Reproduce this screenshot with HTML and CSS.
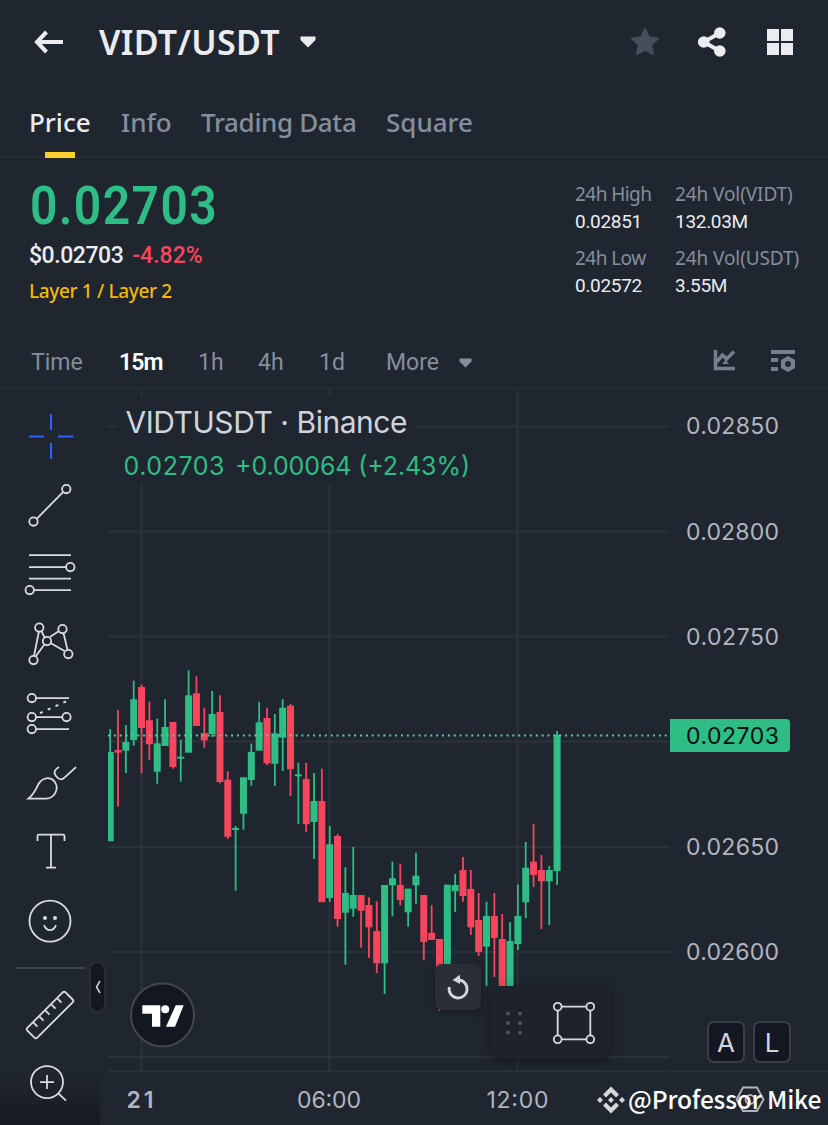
FILE: index.html
```
<!DOCTYPE html>
<html lang="en">
<head>
    <meta charset="UTF-8">
    <meta name="viewport" content="width=device-width, initial-scale=1.0">
    <title>VIDT/USDT</title>
    <link rel="stylesheet" href="styles.css">
</head>
<body>

<!-- Header -->
<header class="header">
    <svg class="back" width="30" height="24" viewBox="0 0 30 24"><path d="M12.500 2 3 12l9.500 10M3 12h26" fill="none" stroke="#eaecef" stroke-width="4"/></svg>
    <h1 class="pair">VIDT/USDT</h1>
    <svg class="pair-arrow" width="16" height="12" viewBox="0 0 16 12"><path d="M.5.5h15v3.500L8 11.500.5 4z" fill="#eaecef"/></svg>
    <div class="header-icons">
        <svg width="30" height="30" viewBox="0 0 30 30"><path d="m15 2 3.900 8.300 9.100 1.200-6.700 6.300 1.700 9.200-8-4.400L7 27l1.700-9.200L2 11.500l9.100-1.200z" fill="#474d5b" stroke="#474d5b" stroke-width="2" stroke-linejoin="round"/></svg>
        <svg width="30" height="30" viewBox="0 0 30 30"><g fill="#eaecef"><circle cx="6.700" cy="15" r="5.800"/><circle cx="22.800" cy="6" r="5.800"/><circle cx="22.800" cy="24" r="5.800"/></g><path d="M22.800 6 6.700 15l16.100 9" fill="none" stroke="#eaecef" stroke-width="4"/></svg>
        <svg class="menu" width="26" height="26" viewBox="0 0 26 26"><path d="M0 0h12v12H0zM14 0h12v12H14zM0 14h12v12H0zM14 14h12v12H14z" fill="#eaecef"/></svg>
    </div>
</header>

<!-- Tabs -->
<nav class="tabs">
    <a class="tab active">Price</a>
    <a class="tab tab-info">Info</a>
    <a class="tab tab-data">Trading Data</a>
    <a class="tab tab-square">Square</a>
</nav>

<!-- Ticker -->
<section class="ticker">
    <div class="quote">
        <div class="last"><span class="fit">0.02703</span></div>
        <div class="fiat"><span>$0.02703</span><span class="down">-4.82%</span></div>
        <div class="tag">Layer 1 / Layer 2</div>
    </div>
    <div class="stats">
        <div class="stat"><span class="label narrow">24h High</span><span class="value">0.02851</span></div>
        <div class="stat"><span class="label">24h Vol(VIDT)</span><span class="value">132.03M</span></div>
        <div class="stat"><span class="label narrow">24h Low</span><span class="value">0.02572</span></div>
        <div class="stat"><span class="label">24h Vol(USDT)</span><span class="value">3.55M</span></div>
    </div>
</section>

<!-- Intervals -->
<div class="intervals">
    <span class="time">Time</span>
    <span class="m15 selected">15m</span>
    <span class="h1">1h</span>
    <span class="h4">4h</span>
    <span class="d1">1d</span>
    <span class="more">More</span>
    <svg width="13" height="10" viewBox="0 0 13 10"><path d="M.5.5h12v3L6.500 9.500.5 3.500z" fill="#848e9c"/></svg>
    <div class="interval-icons">
        <svg width="24" height="24" viewBox="0 0 24 24"><path d="M3.500 1v18.500H23M4.500 13l6-7 4 4L22 2.500" fill="none" stroke="#767f8d" stroke-width="3.500"/><path d="m10 15 3.500-4 3.500 4z" fill="#767f8d"/></svg>
        <svg width="26" height="24" viewBox="0 0 26 24"><path d="M1 1h24v4H1zM1 9h7v4H1zM1 18h7v4H1z" fill="#767f8d"/><path d="m18 7 7 4v8l-7 4-7-4v-8zm0 5.100a2.900 2.900 0 1 0 0 5.800 2.900 2.900 0 0 0 0-5.800z" fill="#767f8d" fill-rule="evenodd"/></svg>
    </div>
</div>

<!-- Chart -->
<main class="chart">
    <div class="tools">
        <svg class="tool cross" viewBox="0 0 100 69"><path d="M51 12v16M51 41v16M29 34.500h15M58 34.500h15.500"/></svg>
        <svg class="tool" viewBox="0 0 100 69"><path d="m36.500 48 26.500-27"/><circle cx="33.500" cy="50.500" r="4.200"/><circle cx="66.300" cy="18" r="4.200"/></svg>
        <svg class="tool" viewBox="0 0 100 69"><path d="M29 15h42M29 27h37M29 38.500h42M34 50h37"/><circle cx="70.300" cy="27" r="4.200"/><circle cx="29.700" cy="50" r="4.200"/></svg>
        <svg class="tool" viewBox="0 0 100 69"><path d="m39 22-5 25M41.500 22l3.500 7M50 28l9-6M63.500 24l4 17M50.500 34l14 8M44 36l-8 11"/><circle cx="39.300" cy="18.500" r="4.200"/><circle cx="62.500" cy="20" r="4.200"/><circle cx="47" cy="32" r="4.200"/><circle cx="33.500" cy="51" r="4.200"/><circle cx="68.300" cy="45" r="4.200"/></svg>
        <svg class="tool" viewBox="0 0 100 69"><path d="M36 20h33M36 39h26M36 51h33"/><path d="m40 35 27-12" stroke-dasharray="3 5.500" stroke-width="2"/><circle cx="31.800" cy="20" r="4.200"/><circle cx="31.800" cy="39" r="4.200"/><circle cx="66.500" cy="39" r="4.200"/><circle cx="31.800" cy="51" r="4.200"/></svg>
        <svg class="tool" viewBox="0 0 100 69"><path d="M28.500 51.500c6-5 7.500-10 10-14.500 4-7 12-7.500 16-2.500 5.500 7.500-.5 17-8.500 17zM59 20c-5 2.500-5.500 6-3 9 3.500 4.500 6 4 9 1l11-10"/></svg>
        <svg class="tool" viewBox="0 0 100 69"><path d="M37.500 24v-5q0-1.500 1.500-1.500h24q1.500 0 1.500 1.500v5M51 17.500v33M46 50.500h10"/></svg>
        <svg class="tool" viewBox="0 0 100 69"><circle cx="50" cy="35" r="20.500"/><path d="M44 39q2 5 6 5t6-5"/><g class="dot"><circle cx="45" cy="32" r="2"/><circle cx="55" cy="32" r="2"/></g></svg>
        <div class="divider"></div>
        <svg class="tool" viewBox="0 0 100 69"><rect x="23" y="27" width="54" height="14" rx="2" transform="rotate(-45 50 34)"/><path d="m33.500 41.500 4 4M39.500 35.500l4 4M45.500 29.500l4 4M51.500 23.500l4 4M57.500 17.500l4 4"/></svg>
        <svg class="tool" viewBox="0 0 100 69"><circle cx="47" cy="32" r="16"/><path d="M47 25v14M40 32h14M58 43l8 7.500"/></svg>
    </div>

    <svg class="plot" viewBox="108 389 720 736">
        <g class="grid">
            <path d="M108 426.500h8M416 426.500h254M108 531.500h562M108 636.500h562M108 741.500h562M108 847h562M108 952h562M108 1057h562M108 1071.500h562M672 1071.500h156"/>
            <path d="M141.500 389v8M141.500 483v588M329.500 389v8M329.500 483v588M517.500 389v682"/>
        </g>
        <g id="candles"></g>
        <path class="last-line" d="M108 735.500h562"/>
        <g class="axis">
            <text x="686" y="434" textLength="93">0.02850</text>
            <text x="686" y="539.500" textLength="93">0.02800</text>
            <text x="686" y="644.500" textLength="93">0.02750</text>
            <text x="686" y="855" textLength="93">0.02650</text>
            <text x="686" y="960" textLength="93">0.02600</text>
            <text class="day" x="126.500" y="1108" textLength="27">21</text>
            <text x="297" y="1108" textLength="64">06:00</text>
            <text x="486.500" y="1108" textLength="62">12:00</text>
        </g>
        <path d="M670 719h116q4 0 4 4v25q0 4-4 4H670z" fill="#2ebd85"/>
        <text class="last-label" x="686" y="743.500" textLength="93">0.02703</text>
        <text class="symbol" x="125.500" y="433" textLength="282">VIDTUSDT · Binance</text>
        <text class="change" x="123.500" y="474.500" textLength="101">0.02703</text>
        <text class="change" x="235" y="474.500" textLength="235">+0.00064 (+2.43%)</text>

        <!-- TradingView badge -->
        <circle cx="162.500" cy="1015" r="31.500" fill="#131722" stroke="#434651" stroke-width="2"/>
        <path d="M142.300 1005.300h18v21.400h-8.300v-13h-9.700zM175.700 1005.300h8L175 1026.700h-9z" fill="#fff"/>
        <circle cx="165.200" cy="1009.300" r="4" fill="#fff"/>

        <path d="m743 1087.500h14l6.500 12-6.500 11.500h-14l-6.500-11.500z" fill="none" stroke="#b2b5be" stroke-width="1.800"/>
        <circle cx="750" cy="1099.500" r="4.500" fill="none" stroke="#b2b5be" stroke-width="1.800"/>
    </svg>

    <div class="collapse"><svg width="6" height="14" viewBox="0 0 6 14"><path d="M5 1 1.500 7 5 13" fill="none" stroke="#d1d4dc" stroke-width="1.500"/></svg></div>

    <div class="reset"><svg width="24" height="26" viewBox="0 0 24 26"><path d="M3.300 13A9 9 0 1 0 12 6" fill="none" stroke="#d1d4dc" stroke-width="2.800"/><path d="M6.500 6 14 .8V10z" fill="#d1d4dc"/></svg></div>

    <div class="floating">
        <svg width="18" height="26" viewBox="0 0 18 26"><g fill="#50535e"><circle cx="3" cy="3.500" r="2"/><circle cx="15" cy="3.500" r="2"/><circle cx="3" cy="13" r="2"/><circle cx="15" cy="13" r="2"/><circle cx="3" cy="22.500" r="2"/><circle cx="15" cy="22.500" r="2"/></g></svg>
        <svg width="44" height="44" viewBox="0 0 44 44"><g fill="none" stroke="#d9dbe3" stroke-width="1.800"><path d="M10 5.700h24M10 38.300h24M5.700 10v24M38.300 10v24"/><circle cx="5.700" cy="5.700" r="3.900"/><circle cx="38.300" cy="5.700" r="3.900"/><circle cx="5.700" cy="38.300" r="3.900"/><circle cx="38.300" cy="38.300" r="3.900"/></g></svg>
    </div>

    <div class="scale-buttons"><span>A</span><span>L</span></div>

    <div class="credit">
        <svg width="28" height="28" viewBox="0 0 28 28"><path d="m14 .5 8 8-3 3-5-5-5 5-3-3zM14 27.500l8-8-3-3-5 5-5-5-3 3zM14 11l3 3-3 3-3-3zM3 11l3 3-3 3-3-3zM25 11l3 3-3 3-3-3z" fill="#d6d6d6"/></svg>
        <span>@Professor Mike</span>
    </div>
</main>

<script src="script.js"></script>
</body>
</html>
```
FILE: styles.css
```
* {
    box-sizing: border-box;
}

body {
    margin: 0;
    width: 828px;
    height: 1125px;
    overflow: hidden;
    background: #202630;
    color: #eaecef;
    font-family: "Noto Sans", sans-serif;
}

svg {
    display: block;
    flex: none;
}

/* Header */
.header {
    display: flex;
    align-items: center;
    height: 84px;
    padding: 0 35px 0 34px;
}

.pair {
    width: 181px;
    margin: 0 20px 0 35px;
    font-size: 34px;
    font-weight: 600;
    line-height: 40px;
    letter-spacing: 0.3px;
    white-space: nowrap;
}

.header-icons {
    display: flex;
    align-items: center;
    gap: 37px;
    margin-left: auto;
}

.menu {
    margin-left: 3px;
}

/* Tabs */
.tabs {
    display: flex;
    height: 74px;
    padding-left: 29px;
    border-bottom: 1px solid #2b313b;
    font-size: 26px;
    font-weight: 500;
    line-height: 77px;
    color: #848e9c;
    white-space: nowrap;
}

.tab {
    width: 92px;
}

.tab-info {
    width: 80px;
}

.tab-data {
    width: 185px;
    letter-spacing: -0.35px;
}

.active {
    position: relative;
    color: #eaecef;
}

.active::after {
    content: "";
    position: absolute;
    left: 16px;
    bottom: -1px;
    width: 30px;
    height: 6px;
    background: #f8d12f;
}

/* Ticker */
.ticker {
    display: flex;
    justify-content: space-between;
    height: 176px;
    padding: 20px 0 0 29px;
    white-space: nowrap;
}

.last {
    color: #2ebd85;
    font-family: Roboto, sans-serif;
    font-size: 54px;
    font-weight: 600;
    line-height: 56px;
}

.last .fit {
    display: inline-block;
    padding-left: 1px;
    transform: scaleX(0.89);
    transform-origin: left center;
    letter-spacing: 1.6px;
}

.fiat {
    display: flex;
    gap: 9px;
    margin-top: 8px;
    font-family: Roboto, sans-serif;
    font-size: 23px;
    font-weight: 500;
    line-height: 28px;
    letter-spacing: -0.45px;
}

.down {
    color: #f6465d;
    letter-spacing: 0;
}

.tag {
    margin-top: 8px;
    color: #f0b90b;
    font-size: 19px;
    font-weight: 500;
    line-height: 26px;
    letter-spacing: -0.35px;
}

.stats {
    display: grid;
    grid-template-columns: 100px 153px;
    grid-auto-rows: 63.5px;
    padding-top: 3px;
}

.stat {
    display: flex;
    flex-direction: column;
}

.label {
    color: #848e9c;
    font-size: 19px;
    line-height: 27px;
    letter-spacing: -0.1px;
}

.narrow {
    letter-spacing: -0.55px;
}

.value {
    font-family: Roboto, sans-serif;
    font-size: 19px;
    line-height: 28px;
    letter-spacing: -0.3px;
}

/* Intervals */
.intervals {
    display: flex;
    align-items: center;
    height: 55px;
    padding: 3px 32px 0 31px;
    border-bottom: 1px solid #2b313b;
    color: #848e9c;
    font-family: Roboto, sans-serif;
    font-size: 23px;
    white-space: nowrap;
}

.time {
    width: 88px;
}

.m15 {
    width: 79px;
}

.h1 {
    width: 60px;
}

.h4 {
    width: 61px;
}

.d1 {
    width: 67px;
}

.more {
    width: 73px;
}

.selected {
    color: #fff;
    font-weight: 600;
    letter-spacing: -0.9px;
}

.interval-icons {
    display: flex;
    gap: 34px;
    margin: -3px 0 0 auto;
}

/* Chart */
.chart {
    position: relative;
    display: flex;
    height: 736px;
    font-family: Inter, sans-serif;
}

.tools {
    width: 100px;
    margin-right: 8px;
    padding-top: 13px;
    background: linear-gradient(transparent 680px, #181b26 730px);
}

.tool {
    width: 100px;
    height: 69.1px;
    fill: none;
    stroke: #d9dbe3;
    stroke-width: 1.8;
}

.cross {
    stroke: #2962ff;
    stroke-width: 2;
}

.dot {
    fill: #d9dbe3;
    stroke: none;
}

.divider {
    height: 2px;
    margin: 12px 15px 12px;
    background: #434651;
}

.plot {
    width: 720px;
    height: 736px;
}

.grid {
    fill: none;
    stroke: #2c323c;
    stroke-width: 2;
}

.up-candle {
    fill: #2ebd85;
}

.down-candle {
    fill: #f6465d;
}

.last-line {
    stroke: #5fc9a0;
    stroke-width: 2;
    stroke-dasharray: 2 3.86;
}

.axis {
    fill: #b2b5be;
    font-size: 23px;
}

.day {
    font-weight: 600;
}

.last-label {
    fill: #0c0e12;
    font-size: 23px;
}

.symbol {
    fill: #d1d4dc;
    font-size: 30px;
}

.change {
    fill: #2ebd85;
    font-size: 25px;
}

/* Panels that float over the chart */
.collapse,
.reset,
.floating,
.scale-buttons,
.credit {
    position: absolute;
    display: flex;
    align-items: center;
}

.collapse {
    left: 89px;
    top: 572px;
    width: 17px;
    height: 52px;
    justify-content: center;
    border: 2px solid #2a2e39;
    border-radius: 9px;
    background: #131722;
}

.reset {
    left: 435px;
    top: 575px;
    width: 46px;
    height: 46px;
    justify-content: center;
    border-radius: 7px;
    background: #2a2e39;
    box-shadow: 0 2px 6px rgba(0, 0, 0, 0.4);
}

.floating {
    left: 491px;
    top: 597px;
    width: 119px;
    height: 73px;
    gap: 29px;
    padding: 0 14px;
    border-radius: 9px;
    background: #1e222d;
    box-shadow: 0 3px 12px rgba(0, 0, 0, 0.4);
}

.scale-buttons {
    left: 707px;
    top: 632px;
    gap: 8px;
    font-size: 26px;
    line-height: 39px;
    text-align: center;
}

.scale-buttons span {
    width: 38px;
    height: 42px;
    border: 2px solid #3a3e49;
    border-radius: 7px;
    background: #131722;
    color: #d1d4dc;
}

.credit {
    left: 597px;
    top: 694px;
    gap: 3px;
    color: #fff;
    font-family: "Noto Sans CJK SC", sans-serif;
    font-size: 24.5px;
    font-weight: 500;
    line-height: 36px;
    letter-spacing: -0.15px;
    white-space: nowrap;
}

.credit span {
    margin-top: -2px;
}
```
FILE: script.js
```
// direction, high, low, body top, body bottom (in plot units)
var candles = [
    ['u', 729, 841, 752, 841.3], ['d', 710, 806.7, 750, 752.7], ['u', 725, 773, 742, 750.7],
    ['u', 680.7, 745.7, 699.3, 740], ['d', 684.7, 773, 687, 728], ['d', 701.7, 760.3, 720.3, 744.3],
    ['u', 718.7, 783.7, 743.3, 771.7], ['u', 699.3, 745.7, 727, 746], ['d', 722, 768.7, 722, 767],
    ['u', 739.7, 781.7, 756.7, 758.7], ['u', 670.3, 752, 695.3, 752.7], ['d', 676.3, 726, 693.3, 726],
    ['d', 707.7, 747.7, 733, 740.3], ['u', 691, 737, 714, 734], ['d', 695.3, 783.3, 712, 782],
    ['d', 771.3, 839, 779.7, 836.7], ['u', 826, 890.7, 828, 830], ['u', 777.3, 829.7, 777.3, 813.7],
    ['u', 743.7, 785.7, 752, 780], ['u', 702, 750, 722.3, 750.7], ['d', 707.7, 765, 718, 763.3],
    ['u', 714, 786, 733.3, 763.7], ['u', 699.3, 771, 707.7, 737.7], ['d', 703.7, 796, 705.7, 769.3],
    ['u', 762.7, 824, 774.3, 776.3], ['d', 763, 832, 779, 824.3], ['u', 773, 859, 801, 822],
    ['d', 768.7, 902, 801, 902.3], ['u', 826, 901.7, 844.3, 898], ['d', 834, 926.7, 836, 919],
    ['u', 867.3, 964.7, 893, 912.7], ['u', 847, 916.7, 895, 908.7], ['d', 895, 947.7, 895, 910.7],
    ['d', 897.3, 958, 905, 927.3], ['d', 901.3, 973, 931, 963.3], ['u', 885, 994, 885, 963.3],
    ['u', 861.7, 916.3, 878.3, 885.3], ['d', 863.7, 905.3, 885, 900], ['u', 888.7, 926.7, 888.7, 912.3],
    ['u', 852.7, 903.7, 875.7, 885.3], ['d', 895, 960, 895, 942], ['d', 905.3, 940, 933, 940],
    ['d', 939, 1011, 939, 985], ['u', 884.7, 985, 884.7, 985], ['u', 874, 912, 885, 891.3],
    ['d', 857, 901.7, 870, 896], ['d', 870, 935, 889, 927.3], ['d', 893, 956, 920, 952],
    ['u', 901.7, 986, 916, 946.7], ['d', 893, 977, 916, 938], ['d', 914, 987, 939, 987],
    ['u', 922, 987, 941, 987], ['u', 884.7, 950, 916, 944], ['u', 842, 918.3, 867.7, 902.3],
    ['d', 824, 887, 861.7, 875], ['d', 855, 929, 870, 881.3], ['u', 865.7, 925, 870, 881.3],
    ['u', 731, 885, 734.7, 871]
];

var group = document.getElementById('candles');

function addRect(x, y, width, height, className) {
    var rect = document.createElementNS('http://www.w3.org/2000/svg', 'rect');
    rect.setAttribute('x', x);
    rect.setAttribute('y', y);
    rect.setAttribute('width', width);
    rect.setAttribute('height', height);
    rect.setAttribute('class', className);
    group.appendChild(rect);
}

for (var i = 0; i < candles.length; i++) {
    var c = candles[i];
    var x = 110.2 + i * 7.84;
    var name = c[0] === 'u' ? 'up-candle' : 'down-candle';
    addRect(x - 0.9, c[1], 1.8, c[2] - c[1], name);
    addRect(x - 3.5, c[3], 7, c[4] - c[3], name);
}
```
